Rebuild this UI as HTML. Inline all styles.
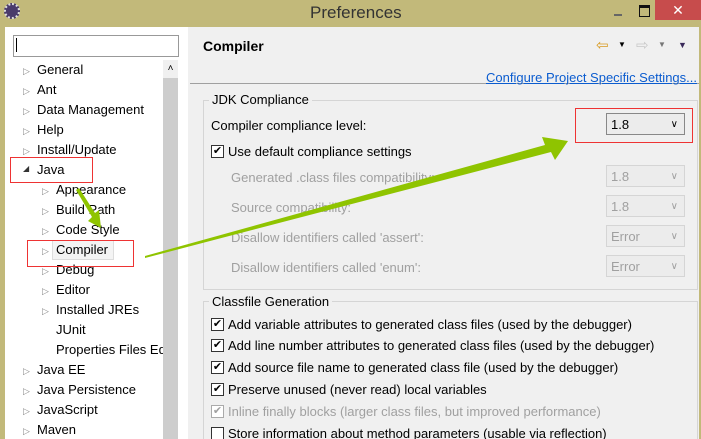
<!DOCTYPE html><html><head><style>
html,body{margin:0;width:701px;height:439px;overflow:hidden}
body{background:#c2b97a;font-family:"Liberation Sans",sans-serif;font-size:13px;color:#000;position:relative}
.a{position:absolute;white-space:nowrap}
.tri{position:absolute;font-size:9px;color:#8a8a8a;line-height:10px}
.cb{position:absolute;width:11px;height:11px;border:1px solid #333;background:#fff;font-size:11px;line-height:11px;text-align:center}
.combo{position:absolute;left:606px;height:22px;border:1px solid #acacac;background:#ececec;font-size:13px;line-height:22px;padding-left:4px;box-sizing:border-box;width:79px}
.combo span{position:absolute;right:6px;top:0;font-size:10px}
.dis{color:#a0a0a0}
</style></head><body>
<div class="a" style="left:4px;top:3px;width:16px;height:16px;border-radius:50%;background:#4a3b6b;border:2px dotted #ddd;box-sizing:border-box"></div>
<div class="a" style="left:310px;top:3px;font-size:17px;color:#333">Preferences</div>
<div class="a" style="left:614px;top:14px;width:8px;height:2px;background:#666"></div>
<div class="a" style="left:639px;top:5px;width:9px;height:8px;border:1px solid #111;border-top-width:3px"></div>
<div class="a" style="left:655px;top:0;width:46px;height:20px;background:#c74c4c;color:#fff;text-align:center;font-size:14px;line-height:20px">✕</div>
<div class="a" style="left:5px;top:27px;width:183px;height:412px;background:#fff"></div>
<div class="a" style="left:13px;top:35px;width:164px;height:20px;border:1px solid #999;background:#fff"></div>
<div class="a" style="left:16px;top:38px;width:1px;height:14px;background:#000"></div>
<div class="a" style="left:163px;top:60px;width:15px;height:379px;background:#cdcdcd"></div>
<div class="a" style="left:163px;top:60px;width:15px;height:18px;background:#f0f0f0;font-size:10px;text-align:center;line-height:18px">˄</div>
<div class="a" style="left:188px;top:27px;width:511px;height:412px;background:#f0f0f0"></div>
<div class="a" style="left:190px;top:27px;width:509px;height:56px;background:#f0f0f0;border-bottom:1px solid #a0a0a0"></div>
<div class="a" style="left:203px;top:38px;font-weight:bold;font-size:14px">Compiler</div>
<div class="a" style="left:596px;top:36px;color:#d89a20;font-size:15px">⇦</div>
<div class="a" style="left:618px;top:40px;font-size:8px">▼</div>
<div class="a" style="left:636px;top:36px;color:#c8c8c8;font-size:15px">⇨</div>
<div class="a" style="left:658px;top:40px;font-size:8px;color:#777">▼</div>
<div class="a" style="left:678px;top:40px;font-size:9px;color:#3a2a5a">▼</div>
<div class="a" style="left:486px;top:70px;color:#0b5ccf;text-decoration:underline">Configure Project Specific Settings...</div>
<!-- tree -->
<div class="tri" style="left:23px;top:66px">▷</div><div class="a" style="left:37px;top:62px">General</div>
<div class="tri" style="left:23px;top:86px">▷</div><div class="a" style="left:37px;top:82px">Ant</div>
<div class="tri" style="left:23px;top:106px">▷</div><div class="a" style="left:37px;top:102px">Data Management</div>
<div class="tri" style="left:23px;top:126px">▷</div><div class="a" style="left:37px;top:122px">Help</div>
<div class="tri" style="left:23px;top:146px">▷</div><div class="a" style="left:37px;top:142px">Install/Update</div>
<div class="a" style="left:23px;top:164px;font-size:8px;color:#333">◢</div><div class="a" style="left:37px;top:162px">Java</div>
<div class="tri" style="left:42px;top:186px">▷</div><div class="a" style="left:56px;top:182px">Appearance</div>
<div class="tri" style="left:42px;top:206px">▷</div><div class="a" style="left:56px;top:202px">Build Path</div>
<div class="tri" style="left:42px;top:226px">▷</div><div class="a" style="left:56px;top:222px">Code Style</div>
<div class="a" style="left:52px;top:240px;width:60px;height:18px;background:#f4f4f4;border:1px solid #ddd"></div>
<div class="tri" style="left:42px;top:246px">▷</div><div class="a" style="left:56px;top:242px">Compiler</div>
<div class="tri" style="left:42px;top:266px">▷</div><div class="a" style="left:56px;top:262px">Debug</div>
<div class="tri" style="left:42px;top:286px">▷</div><div class="a" style="left:56px;top:282px">Editor</div>
<div class="tri" style="left:42px;top:306px">▷</div><div class="a" style="left:56px;top:302px">Installed JREs</div>
<div class="a" style="left:56px;top:322px">JUnit</div>
<div class="a" style="left:56px;top:342px;width:107px;overflow:hidden">Properties Files Editor</div>
<div class="tri" style="left:23px;top:366px">▷</div><div class="a" style="left:37px;top:362px">Java EE</div>
<div class="tri" style="left:23px;top:386px">▷</div><div class="a" style="left:37px;top:382px">Java Persistence</div>
<div class="tri" style="left:23px;top:406px">▷</div><div class="a" style="left:37px;top:402px">JavaScript</div>
<div class="tri" style="left:23px;top:426px">▷</div><div class="a" style="left:37px;top:422px">Maven</div>
<div class="a" style="left:10px;top:157px;width:81px;height:24px;border:1px solid #e33"></div>
<div class="a" style="left:27px;top:240px;width:105px;height:25px;border:1px solid #e33"></div>
<!-- JDK group -->
<div class="a" style="left:203px;top:100px;width:493px;height:188px;border:1px solid #d5d5d5"></div>
<div class="a" style="left:209px;top:92px;background:#f0f0f0;padding:0 3px">JDK Compliance</div>
<div class="a" style="left:211px;top:118px">Compiler compliance level:</div>
<div class="combo" style="top:113px;border-color:#888">1.8<span>∨</span></div>
<div class="a" style="left:575px;top:108px;width:116px;height:33px;border:1px solid #e33"></div>
<div class="cb" style="left:211px;top:145px">✔</div><div class="a" style="left:228px;top:144px">Use default compliance settings</div>
<div class="a dis" style="left:231px;top:170px">Generated .class files compatibility:</div>
<div class="combo dis" style="top:165px;border-color:#d5d5d5">1.8<span>∨</span></div>
<div class="a dis" style="left:231px;top:200px">Source compatibility:</div>
<div class="combo dis" style="top:195px;border-color:#d5d5d5">1.8<span>∨</span></div>
<div class="a dis" style="left:231px;top:230px">Disallow identifiers called 'assert':</div>
<div class="combo dis" style="top:225px;border-color:#d5d5d5">Error<span>∨</span></div>
<div class="a dis" style="left:231px;top:260px">Disallow identifiers called 'enum':</div>
<div class="combo dis" style="top:255px;border-color:#d5d5d5">Error<span>∨</span></div>
<!-- Classfile -->
<div class="a" style="left:203px;top:301px;width:493px;height:150px;border:1px solid #d5d5d5"></div>
<div class="a" style="left:209px;top:294px;background:#f0f0f0;padding:0 3px">Classfile Generation</div>
<div class="cb" style="left:211px;top:318px">✔</div><div class="a" style="left:228px;top:317px">Add variable attributes to generated class files (used by the debugger)</div>
<div class="cb" style="left:211px;top:339px">✔</div><div class="a" style="left:228px;top:338px">Add line number attributes to generated class files (used by the debugger)</div>
<div class="cb" style="left:211px;top:361px">✔</div><div class="a" style="left:228px;top:360px">Add source file name to generated class file (used by the debugger)</div>
<div class="cb" style="left:211px;top:383px">✔</div><div class="a" style="left:228px;top:382px">Preserve unused (never read) local variables</div>
<div class="cb dis" style="left:211px;top:405px;border-color:#aaa">✔</div><div class="a dis" style="left:228px;top:404px">Inline finally blocks (larger class files, but improved performance)</div>
<div class="cb" style="left:211px;top:427px"></div><div class="a" style="left:228px;top:426px">Store information about method parameters (usable via reflection)</div>
<svg class="a" style="left:0;top:0" width="701" height="439">
<polygon points="145,256 545,145 542,137 568,141 555,160 551,152 145,258" fill="#8fc400"/>
<polygon points="76,190 79,188 95,213 99,210 101,228 88,221 92,217" fill="#8fc400"/>
</svg>
</body></html>
